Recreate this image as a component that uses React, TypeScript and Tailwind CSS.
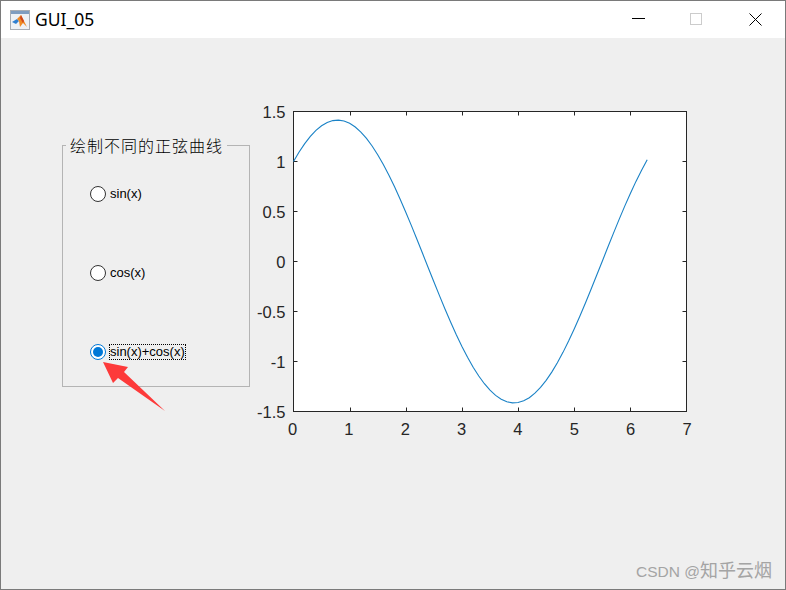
import React from 'react';

const PLOT_X = 293.5;
const PLOT_Y = 111.5;
const PLOT_W = 393;
const PLOT_H = 300;
const xToPx = (x: number) => PLOT_X + (x / 7) * PLOT_W;
const yToPx = (y: number) => PLOT_Y + ((1.5 - y) / 3) * PLOT_H;

const curve = Array.from({ length: 64 }, (_, i) => {
  const x = i * 0.1 > 6.3 ? 6.3 : i * 0.1;
  const y = Math.sin(x) + Math.cos(x);
  return `${xToPx(x).toFixed(2)},${yToPx(y).toFixed(2)}`;
}).join(' ');

const xTicks = [0, 1, 2, 3, 4, 5, 6, 7];
const yTicks = [
  { v: 1.5, label: '1.5' },
  { v: 1, label: '1' },
  { v: 0.5, label: '0.5' },
  { v: 0, label: '0' },
  { v: -0.5, label: '-0.5' },
  { v: -1, label: '-1' },
  { v: -1.5, label: '-1.5' },
];

const MatlabIcon = () => (
  <svg width="20" height="20" viewBox="0 0 20 20" className="shrink-0">
    <rect x="0.5" y="0.5" width="19" height="19" fill="#eef1f5" stroke="#a8adb4" />
    <rect x="1" y="1" width="18" height="3" fill="#7f9dc0" />
    <path d="M2 12 L7 9 L9 11 L6 14 Z" fill="#2f7fd0" />
    <path d="M7 9 L11 5 L17 17 L13 13 L10 17 L9 11 Z" fill="#f08a24" />
    <path d="M11 5 L14 11 L13 13 L10 8 Z" fill="#d0451b" />
  </svg>
);

const Radio = ({ label, checked }: { label: string; checked?: boolean }) => (
  <div className="flex h-[16px] items-center">
    {checked ? (
      <span className="flex h-4 w-4 items-center justify-center rounded-full border border-[#0078d7] bg-white">
        <span className="h-[10px] w-[10px] rounded-full bg-[#0078d7]" />
      </span>
    ) : (
      <span className="h-4 w-4 rounded-full border border-[#333333] bg-white" />
    )}
    <span
      className={`ml-1 text-[13px] leading-[14px] text-black ${
        checked ? 'outline-1 outline-dotted outline-black' : ''
      }`}
    >
      {label}
    </span>
  </div>
);

export default function App() {
  return (
    <div className="relative flex h-[590px] w-[786px] flex-col overflow-hidden border border-[#7a7a7a] bg-[#efefef] font-['Liberation_Sans',Arial,sans-serif]">
      <div className="flex h-[37px] shrink-0 items-center bg-white pl-[9px]">
        <MatlabIcon />
        <span className="ml-[5px] font-['Noto_Sans',sans-serif] text-[17.5px] text-black">GUI_05</span>
        <div className="ml-auto flex items-center pr-[23px]">
          <svg width="13" height="13" viewBox="0 0 13 13" className="mr-[45px]">
            <path d="M0 5.5 H13" stroke="#000" />
          </svg>
          <svg width="13" height="13" viewBox="0 0 13 13" className="mr-[46px]">
            <rect x="0.5" y="0.5" width="11" height="11" fill="none" stroke="#cccccc" />
          </svg>
          <svg width="13" height="13" viewBox="0 0 13 13">
            <path d="M0.5 0.5 L12.5 12.5 M12.5 0.5 L0.5 12.5" stroke="#000" />
          </svg>
        </div>
      </div>

      <div className="pl-[61px] pt-[98px]">
        <fieldset className="h-[251px] w-[188px] border border-[#b4b4b4] pl-[27px] pr-0">
          <legend className="ml-[-24px] px-[4px] font-['Noto_Sans_CJK_SC',sans-serif] text-[16px] font-light leading-[18px] tracking-[1px] text-black">
            绘制不同的正弦曲线
          </legend>
          <div className="mt-[32px] flex flex-col gap-[63px]">
            <Radio label="sin(x)" />
            <Radio label="cos(x)" />
            <Radio label="sin(x)+cos(x)" checked />
          </div>
        </fieldset>
      </div>

      {/* chart, in page coordinates */}
      <svg
        width="786"
        height="590"
        viewBox="0 0 786 590"
        className="absolute left-[-1px] top-[-1px]"
      >
        <rect x={PLOT_X} y={PLOT_Y} width={PLOT_W} height={PLOT_H} fill="#ffffff" stroke="#262626" />
        {xTicks.map((t) => (
          <g key={t}>
            {t > 0 && t < 7 && (
              <path
                d={`M${Math.round(xToPx(t)) + 0.5} ${PLOT_Y} v4 M${Math.round(xToPx(t)) + 0.5} ${PLOT_Y + PLOT_H} v-4`}
                stroke="#262626"
              />
            )}
            <text x={292.5 + t * 56.36} y="435" textAnchor="middle" fontSize="16.5" fill="#262626">
              {t}
            </text>
          </g>
        ))}
        {yTicks.map((t) => (
          <g key={t.label}>
            {Math.abs(t.v) < 1.5 && (
              <path
                d={`M${PLOT_X} ${yToPx(t.v)} h4 M${PLOT_X + PLOT_W} ${yToPx(t.v)} h-4`}
                stroke="#262626"
              />
            )}
            <text x="285.5" y={yToPx(t.v) + 6} textAnchor="end" fontSize="16.5" fill="#262626">
              {t.label}
            </text>
          </g>
        ))}
        <polyline points={curve} fill="none" stroke="#1a82c6" strokeWidth="1.1" />
        <polygon
          points="103,362 128,367 124,372 165,411 118,378 113,383"
          fill="#fd3a3a"
        />
      </svg>

      <span className="absolute bottom-[7px] right-[13px] text-[15.5px] leading-[20px] text-[#a4a4a4]">
        CSDN @<span className="font-['Noto_Sans_CJK_SC',sans-serif] text-[18px]">知乎云烟</span>
      </span>
    </div>
  );
}
